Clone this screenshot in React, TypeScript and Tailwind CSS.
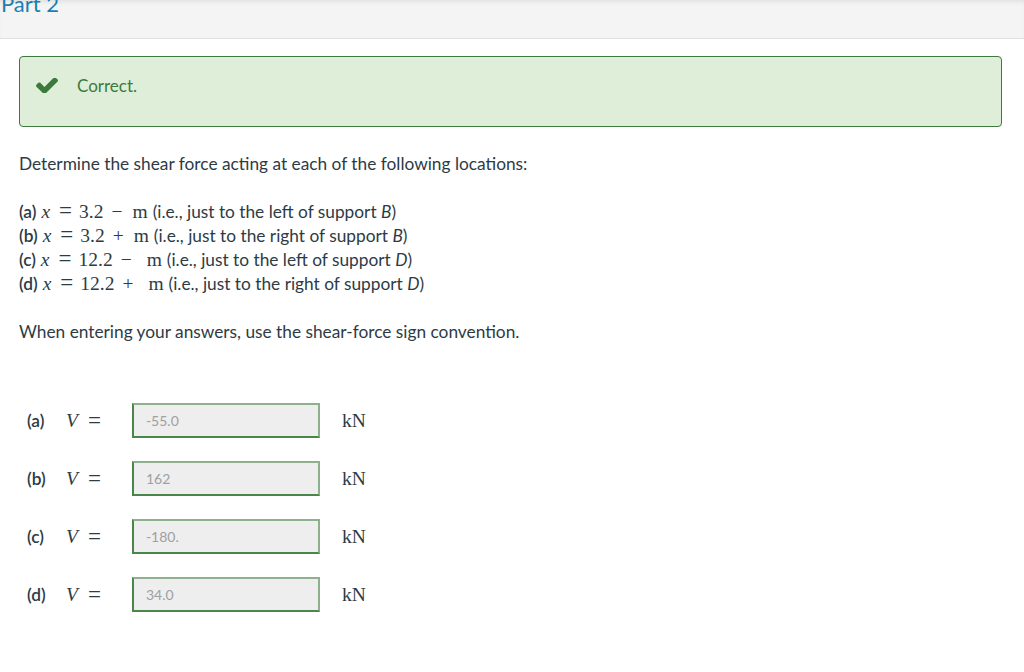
import React from "react";

const serif = { fontFamily: '"Liberation Serif", "Times New Roman", serif' };

function M({ children, italic = false, big = false }: { children: React.ReactNode; italic?: boolean; big?: boolean }) {
  return (
    <span className={`${italic ? "italic" : ""} ${big ? "text-[23px] leading-[20px]" : "text-[19.5px]"}`} style={serif}>
      {children}
    </span>
  );
}

const items: { label: string; val: string; sign: string; wide: boolean; side: string; sup: string }[] = [
  { label: "(a)", val: "3.2", sign: "−", wide: false, side: "left", sup: "B" },
  { label: "(b)", val: "3.2", sign: "+", wide: false, side: "right", sup: "B" },
  { label: "(c)", val: "12.2", sign: "−", wide: true, side: "left", sup: "D" },
  { label: "(d)", val: "12.2", sign: "+", wide: true, side: "right", sup: "D" },
];

const answers = [
  { label: "(a)", v: "-55.0" },
  { label: "(b)", v: "162" },
  { label: "(c)", v: "-180." },
  { label: "(d)", v: "34.0" },
];

function Check() {
  return (
    <svg viewBox="121 398 1550 1028" width="22" height="15" className="ml-[16px] mt-[21px] shrink-0" fill="#3b7a3b">
      <path d="M1671 566q0 40-28 68l-724 724-136 136q-28 28-68 28t-68-28l-136-136-362-362q-28-28-28-68t28-68l136-136q28-28 68-28t68 28l294 295 656-657q28-28 68-28t68 28l136 136q28 28 28 68z" />
    </svg>
  );
}

export default function App() {
  return (
    <div
      className="w-[1024px] h-[672px] bg-white text-[#2d3b45] overflow-hidden"
      style={{ fontFamily: 'Lato, "Open Sans", sans-serif' }}
    >
      <div className="h-[39px] bg-[#f4f4f4] border-b border-[#e0e0e0] shadow-[inset_0_4px_4px_-2px_rgba(0,0,0,0.08)] overflow-hidden">
        <div className="text-[22px] leading-none text-[#1a7fb0] pl-[1px] -mt-[7px]">Part 2</div>
      </div>

      <div className="ml-[19px] mr-[22px] mt-[17px] h-[71px] rounded-[4px] border border-[#3d7a3d] bg-[#dfeed9] flex items-start">
        <Check />
        <span className="ml-[19px] mt-[19px] text-[17px] leading-[20px] text-[#3b7a3b]">Correct.</span>
      </div>

      <div className="pl-[19px] text-[17.3px] leading-[24px] mt-[25px]">
        <p>Determine the shear force acting at each of the following locations:</p>
        <div className="mt-[24px]">
          {items.map((it) => (
            <div key={it.label} className="flex items-baseline whitespace-pre h-[24px]">
              <span className="font-semibold">{it.label}</span>
              <span className="ml-[5px]"><M italic>x</M></span>
              <span className="ml-[9px]"><M big>=</M></span>
              <span className="ml-[7px]"><M>{it.val}</M></span>
              <span className="ml-[8px]"><M>{it.sign}</M></span>
              <span className={it.wide ? "ml-[15px]" : "ml-[10px]"}><M>m</M></span>
              <span className="ml-[5px]">
                (i.e., just to the {it.side} of support <span className="italic">{it.sup}</span>)
              </span>
            </div>
          ))}
        </div>
        <p className="mt-[24px]">When entering your answers, use the shear-force sign convention.</p>
      </div>

      <div className="pl-[27px] mt-[59px] flex flex-col gap-[23px]">
        {answers.map((a) => (
          <div key={a.label} className="flex items-center h-[35px]">
            <span className="w-[39px] text-[17.3px] font-semibold">{a.label}</span>
            <span className="italic text-[19.5px]" style={serif}>V</span>
            <span className="ml-[10px] text-[23px] leading-[20px]" style={serif}>=</span>
            <div className="ml-[31px] w-[188px] h-[35px] bg-[#eeeeee] border-2 border-t-[#8fb08f] border-r-[#8fb08f] border-l-[#4a854a] border-b-[#4a854a] flex items-center pl-[12px] text-[14px] text-[#a0a0a0]">
              {a.v}
            </div>
            <span className="ml-[22px] text-[19.5px]" style={serif}>kN</span>
          </div>
        ))}
      </div>
    </div>
  );
}
